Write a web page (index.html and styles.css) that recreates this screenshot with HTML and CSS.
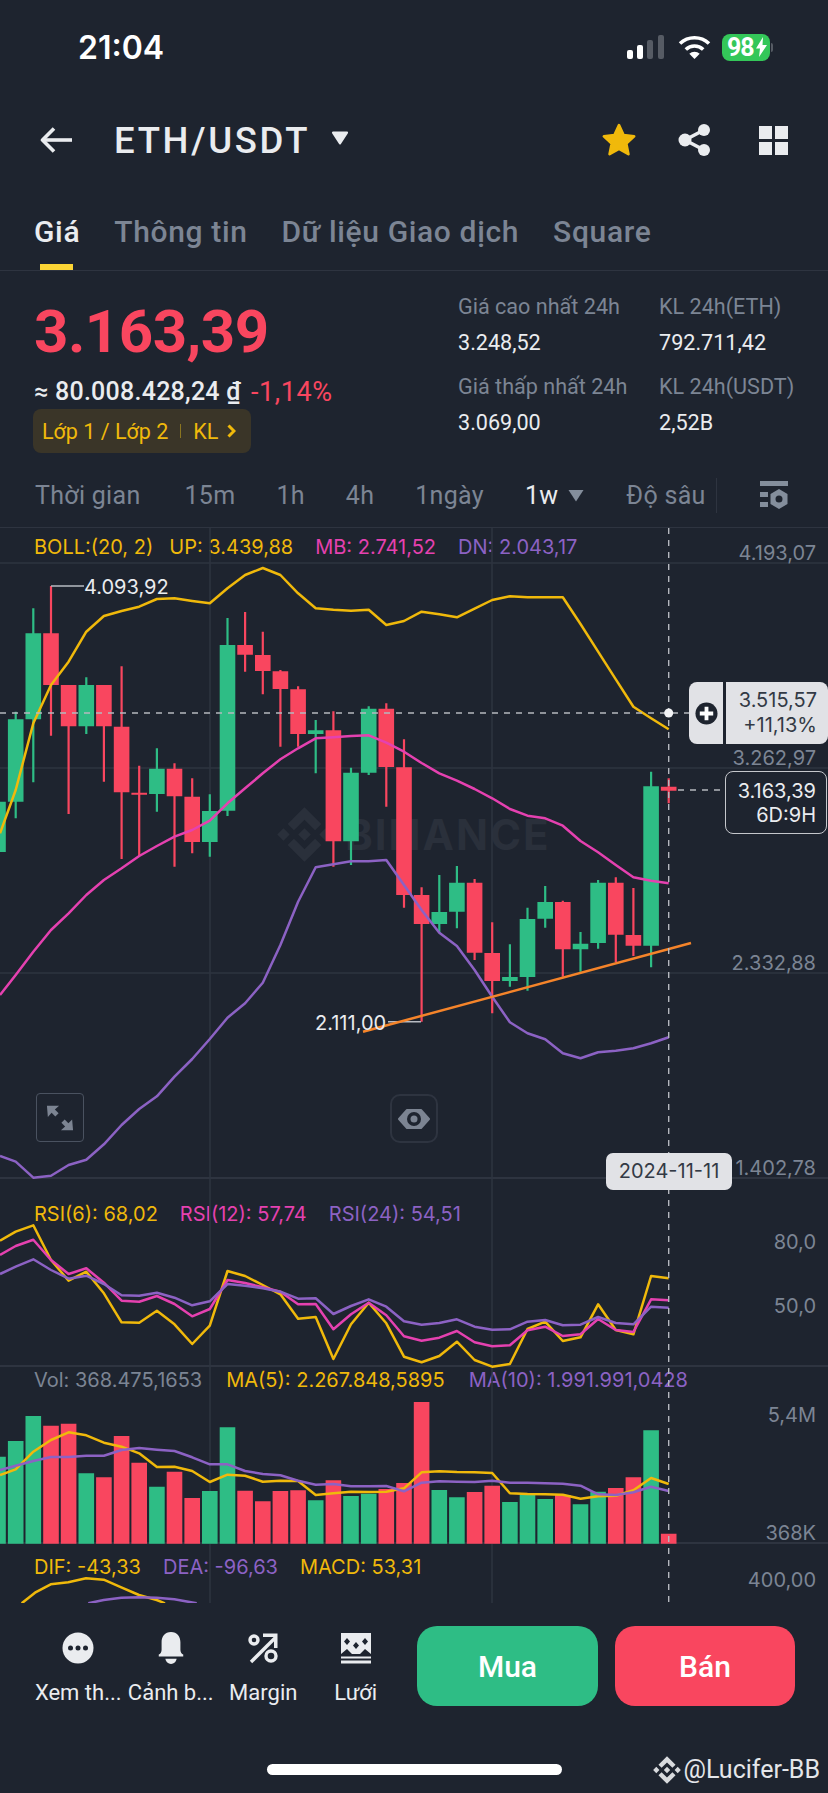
FILE: index.html
```html
<!DOCTYPE html>
<html lang="vi">
<head>
    <meta charset="UTF-8">
    <meta name="viewport" content="width=device-width, initial-scale=1.0">
    <title>ETH/USDT</title>
    <link rel="stylesheet" href="styles.css">
</head>
<body>
    <div class="phone">
        <div class="status">
            <span class="clock">21:04</span>
            <div class="status-icons">
                <svg class="signal" viewBox="0 0 37 24">
                    <rect x="0" y="15" width="6" height="9" rx="2" fill="#fff"/>
                    <rect x="10" y="10" width="6" height="14" rx="2" fill="#fff"/>
                    <rect x="20" y="5" width="6" height="19" rx="2" fill="#565b64"/>
                    <rect x="31" y="0" width="6" height="24" rx="2" fill="#565b64"/>
                </svg>
                <svg class="wifi" viewBox="0 0 33 24" fill="none" stroke="#fff" stroke-width="3.6">
                    <path d="M2 8.5a21 21 0 0 1 29 0"/>
                    <path d="M7.8 14.5a12.6 12.6 0 0 1 17.4 0"/>
                    <path d="M16.5 24l-5.2-5.2a7.4 7.4 0 0 1 10.4 0z" fill="#fff" stroke="none"/>
                </svg>
                <div class="battery">
                    <span>98</span>
                    <svg class="bolt" viewBox="0 0 11 20"><path d="M7 0L0 11.5h4L3 20l8-12H6.5z" fill="#fff"/></svg>
                </div>
                <span class="battery-nub"></span>
            </div>
        </div>

        <div class="header">
            <svg class="back" viewBox="0 0 32 26" fill="none" stroke="#eaecef" stroke-width="3.6" stroke-linejoin="round">
                <path d="M32 13H3"/>
                <path d="M14 1.5L2.5 13 14 24.5"/>
            </svg>
            <h1 class="pair">ETH/USDT</h1>
            <svg class="caret" viewBox="0 0 16 13"><path d="M1.5 1.5h13L8 11.5z" fill="#eaecef" stroke="#eaecef" stroke-width="2" stroke-linejoin="round"/></svg>
            <div class="header-icons">
                <svg class="star" viewBox="0 0 34 34"><path d="M17 3l4.3 9.3 10 1.2-7.4 6.900 2 10L17 25.400 8.100 30.400l2-10L2.700 13.500l10-1.200z" fill="#f0b90b" stroke="#f0b90b" stroke-width="2.500" stroke-linejoin="round"/></svg>
                <svg class="share" viewBox="0 0 34 34" fill="#eaecef">
                    <path d="M26 7L7 17l19 10" fill="none" stroke="#eaecef" stroke-width="3.500"/>
                    <circle cx="26" cy="7" r="6"/>
                    <circle cx="7" cy="17" r="6.500"/>
                    <circle cx="26" cy="27" r="6"/>
                </svg>
                <div class="apps"><span></span><span></span><span></span><span></span></div>
            </div>
        </div>

        <nav class="tabs">
            <a class="tab tab-active">Giá</a>
            <a class="tab">Thông tin</a>
            <a class="tab">Dữ liệu Giao dịch</a>
            <a class="tab">Square</a>
        </nav>

        <section class="summary">
            <div class="quote">
                <div class="last-price">3.163,39</div>
                <div class="fiat-row">
                    <span class="fiat">≈ 80.008.428,24 ₫</span>
                    <span class="change">-1,14%</span>
                </div>
                <div class="tag">
                    <span>Lớp 1 / Lớp 2</span>
                    <i class="tag-divider"></i>
                    <span>KL</span>
                    <svg class="tag-chevron" viewBox="0 0 9 14" fill="none" stroke="#f0b90b" stroke-width="3"><path d="M1.500 1.500L7 7l-5.500 5.500"/></svg>
                </div>
            </div>
            <div class="stats">
                <div class="stat"><span class="stat-label">Giá cao nhất 24h</span><span class="stat-value">3.248,52</span></div>
                <div class="stat"><span class="stat-label">KL 24h(ETH)</span><span class="stat-value">792.711,42</span></div>
                <div class="stat"><span class="stat-label">Giá thấp nhất 24h</span><span class="stat-value">3.069,00</span></div>
                <div class="stat"><span class="stat-label">KL 24h(USDT)</span><span class="stat-value">2,52B</span></div>
            </div>
        </section>

        <div class="intervals">
            <span class="interval-first">Thời gian</span>
            <span>15m</span>
            <span>1h</span>
            <span>4h</span>
            <span>1ngày</span>
            <span class="interval-active">1w
                <svg class="interval-caret" viewBox="0 0 17 13"><path d="M1 1h15L8.500 12.500z" fill="#848e9c"/></svg>
            </span>
            <span>Độ sâu</span>
            <i class="interval-divider"></i>
            <svg class="chart-settings" viewBox="0 0 28 28" fill="#848e9c">
                <rect x="0" y="0" width="28" height="5"/>
                <rect x="0" y="11" width="8" height="5"/>
                <rect x="0" y="21" width="8" height="5"/>
                <path fill-rule="evenodd" d="M19 8l8.500 5v10L19 28l-8.500-5V13zM19 14.500a3.500 3.500 0 1 0 0 7 3.500 3.500 0 0 0 0-7z"/>
            </svg>
        </div>

        <section class="chart">
            <div class="panel panel-main">
                <div class="legend legend-boll">
                    <span class="c-yellow">BOLL:(20, 2)</span>
                    <span class="c-yellow">UP: 3.439,88</span>
                    <span class="c-pink">MB: 2.741,52</span>
                    <span class="c-purple">DN: 2.043,17</span>
                </div>
                <div class="watermark">
                    <svg class="watermark-logo" viewBox="0 0 126 126"><path d="M38.730 53.200L63 28.940l24.280 24.270 14.120-14.120L63 .69 24.600 39.090l14.130 14.110zM.68 63l14.120-14.120L28.920 63 14.800 77.120.68 63zm38.050 9.800L63 97.070 87.280 72.800l14.120 14.100-38.400 38.410-38.400-38.400-.02-.02L38.730 72.800zM97.080 63l14.120-14.120L125.320 63 111.200 77.120 97.080 63zM77.320 63L63 77.330 48.690 63.020 63 48.680z"/></svg>
                    <span>BINANCE</span>
                </div>
            </div>
            <div class="panel panel-rsi">
                <div class="legend">
                    <span class="c-yellow">RSI(6): 68,02</span>
                    <span class="c-pink">RSI(12): 57,74</span>
                    <span class="c-purple">RSI(24): 54,51</span>
                </div>
            </div>
            <div class="panel panel-vol">
                <div class="legend legend-vol">
                    <span class="c-gray">Vol: 368.475,1653</span>
                    <span class="c-yellow">MA(5): 2.267.848,5895</span>
                    <span class="c-purple">MA(10): 1.991.991,0428</span>
                </div>
            </div>
            <div class="panel panel-macd">
                <div class="legend">
                    <span class="c-yellow">DIF: -43,33</span>
                    <span class="c-purple">DEA: -96,63</span>
                    <span class="c-yellow">MACD: 53,31</span>
                </div>
            </div>

            <svg class="plot" viewBox="0 528 828 1075" fill="none">
                <path class="grid" d="M210 528V1603M492 528V1603M0 563H828M0 768H828M0 973H828"/>

                <!-- candles -->
                <path class="wick up" d="M15.700 711.700V818.300M33.300 608.300V782.300M86.300 677.300V734M156.900 748.300V811.700M209.800 794.300V856.700M227.500 618V816M315.700 720V773.300M351 767.700V865M368.700 706.300V775M439.300 875V933M456.900 866V928.300M509.900 944.300V986.700M527.500 907.700V990.700M545.200 886V927.700M580.500 932V971.700M598.100 880V948.700M651.100 771.700V967.300"/>
                <path class="body up" d="M-2 801.700V852M15.700 719.300V801.700M33.300 633.300V719.300M86.300 685V726.300M156.900 768.700V794M209.800 811V842M227.500 645V810.700M315.700 730.300V734M351 772.700V841.300M368.700 708.700V772.700M439.300 912V924M456.900 882.700V911.700M509.900 977V981M527.500 919V977M545.200 902V918.700M580.500 943.700V949.300M598.100 882.700V943M651.100 786.300V945.700"/>
                <path class="wick down" d="M51 586V735.700M68.600 685V814M103.900 685V781.700M121.600 666.300V859M139.200 765.700V856M174.500 763.300V866.700M192.200 778.300V853.300M245.100 612V671.700M262.800 631.700V694.300M280.400 670V746.700M298.100 686.300V746.700M333.400 711.300V866.700M386.300 703.300V806.700M404 739.300V907.700M421.600 887.300V1021.700M474.600 879V960M492.200 922.300V1013.300M562.800 900.700V976.700M615.800 877.300V962M633.400 888V956M668.700 778.300V803.300"/>
                <path class="body down" d="M51 633.300V685M68.600 685V726.300M103.900 685V726.300M121.600 726.700V792.300M139.200 792.700V794.700M174.500 768.700V796.300M192.200 796.700V842M245.100 645V654.700M262.800 655V671M280.400 671.300V689M298.100 689.300V734M333.400 730.300V841.300M386.300 708.700V767M404 767.300V895M421.600 895V924M474.600 882.700V952.700M492.200 953V981M562.800 902V949.300M615.800 882.700V934.700M633.400 935V945.700M668.700 786.700V790.700"/>

                <!-- bollinger -->
                <polyline class="line yellow" points="0,833.300 15.700,790 33.300,723.300 51,685 68.600,661.700 86.300,631.700 103.900,616 121.600,611 139.200,606.700 156.900,599 174.500,598.300 192.200,601 209.800,603.300 227.500,588.300 245.100,575 262.800,568 280.400,575 298.100,593.300 315.700,608.300 333.400,609.700 351,610.700 368.700,609.700 386.300,625 404,621 421.600,611.700 439.300,614.300 456.900,617.300 474.600,608.700 492.200,600 509.900,596.300 527.500,597.300 545.200,597.300 562.800,597.300 580.500,624 598.100,651.700 615.800,679.300 633.400,706.700 651.100,718.300 668.700,729.300"/>
                <polyline class="line pink" points="0,995 15.700,975 33.300,951.700 51,930 68.600,913.300 86.300,895 103.900,880 121.600,868.300 139.200,856 156.900,846 174.500,836.700 192.200,830 209.800,820.700 227.500,803.300 245.100,788.300 262.800,773.300 280.400,759.300 298.100,748.300 315.700,738.300 333.400,737.300 351,736 368.700,735.300 386.300,742.700 404,751.700 421.600,763 439.300,773.300 456.900,780.700 474.600,789 492.200,798.300 509.900,809 527.500,815.700 545.200,818.300 562.800,825.700 580.500,841 598.100,852.300 615.800,865 633.400,877.300 651.100,880.700 668.700,883.300"/>
                <polyline class="line purple" points="0,1156 15.700,1161.700 33.300,1177.700 51,1175.700 68.600,1165 86.300,1159.700 103.900,1144.300 121.600,1125 139.200,1109 156.900,1096.300 174.500,1076.700 192.200,1059 209.800,1039 227.500,1017.700 245.100,1003.300 262.800,982.700 280.400,945 298.100,901.700 315.700,867.300 333.400,864.300 351,861.300 368.700,861.300 386.300,860 404,885 421.600,910 439.300,932.700 456.900,946 474.600,970 492.200,996.700 509.900,1022.300 527.500,1033.300 545.200,1039.300 562.800,1053.300 580.500,1058.300 598.100,1052.300 615.800,1050.700 633.400,1048.300 651.100,1043.300 668.700,1037.300"/>

                <!-- drawn trend line and high/low markers -->
                <path class="marker" d="M51 586H84M388 1021.700H421"/>
                <line class="trend" x1="363" y1="1031.700" x2="691" y2="943"/>
                <text class="note" x="84" y="594">4.093,92</text>
                <text class="note" x="315" y="1030">2.111,00</text>

                <!-- rsi -->
                <polyline class="line yellow" points="0,1240.700 15.700,1231.700 33.300,1225.300 51,1260 68.600,1280.700 86.300,1271.700 103.900,1293.300 121.600,1322.300 139.200,1322.700 156.900,1310.700 174.500,1324.300 192.200,1344 209.800,1325.700 227.500,1271 245.100,1276 262.800,1285 280.400,1294.300 298.100,1318.700 315.700,1317 333.400,1359 351,1324.300 368.700,1302.700 386.300,1323.300 404,1356.700 421.600,1362.300 439.300,1356 456.900,1341.700 474.600,1360 492.200,1366.700 509.900,1364 527.500,1329 545.200,1321.700 562.800,1341 580.500,1337.300 598.100,1304.300 615.800,1330 633.400,1334.300 651.100,1276 668.700,1278.300"/>
                <polyline class="line pink" points="0,1255 15.700,1246 33.300,1239.700 51,1260 68.600,1274 86.300,1268.300 103.900,1282.700 121.600,1300.700 139.200,1301.700 156.900,1296 174.500,1304 192.200,1316.300 209.800,1309 227.500,1280 245.100,1283 262.800,1287.300 280.400,1291.700 298.100,1304.300 315.700,1304 333.400,1329.300 351,1314.300 368.700,1302.700 386.300,1315.300 404,1336.300 421.600,1340.700 439.300,1337.700 456.900,1331 474.600,1342.300 492.200,1346.300 509.900,1345.300 527.500,1330.300 545.200,1326.700 562.800,1336 580.500,1334.300 598.100,1319 615.800,1330 633.400,1332 651.100,1299.300 668.700,1300.300"/>
                <polyline class="line purple" points="0,1274 15.700,1266.700 33.300,1259.300 51,1270 68.600,1278.700 86.300,1275.700 103.900,1284 121.600,1295.300 139.200,1295.700 156.900,1292.700 174.500,1297.700 192.200,1305.300 209.800,1301.300 227.500,1284 245.100,1285.700 262.800,1288.300 280.400,1291.700 298.100,1298.700 315.700,1298.300 333.400,1314 351,1306 368.700,1299.300 386.300,1306.700 404,1321.300 421.600,1324.700 439.300,1323 456.900,1319.300 474.600,1326.700 492.200,1329.700 509.900,1329.300 527.500,1321.700 545.200,1320 562.800,1325.300 580.500,1324.700 598.100,1317 615.800,1323 633.400,1324.300 651.100,1306.700 668.700,1307.700"/>

                <!-- volume -->
                <path class="body up" d="M-2 1543.700V1456.700M15.700 1543.700V1441M33.300 1543.700V1416M86.300 1543.700V1473.300M156.900 1543.700V1486.700M209.800 1543.700V1491M227.500 1543.700V1427.300M315.700 1543.700V1500.300M351 1543.700V1496M368.700 1543.700V1493.700M439.300 1543.700V1490M456.900 1543.700V1497.300M509.900 1543.700V1502M527.500 1543.700V1494.300M545.200 1543.700V1499M580.500 1543.700V1504.300M598.100 1543.700V1491.700M651.100 1543.700V1430.300"/>
                <path class="body down" d="M51 1543.700V1425.700M68.600 1543.700V1423.700M103.900 1543.700V1477.300M121.600 1543.700V1436M139.200 1543.700V1462.700M174.500 1543.700V1471.700M192.200 1543.700V1498M245.100 1543.700V1490.700M262.800 1543.700V1501.300M280.400 1543.700V1491M298.100 1543.700V1490.300M333.400 1543.700V1480.300M386.300 1543.700V1489M404 1543.700V1483M421.600 1543.700V1402M474.600 1543.700V1492M492.200 1543.700V1485.700M562.800 1543.700V1495M615.800 1543.700V1488M633.400 1543.700V1477.300M668.700 1543.700V1533.700"/>
                <polyline class="line yellow" points="0,1475 15.700,1469.300 33.300,1451.700 51,1440 68.600,1432.300 86.300,1435.300 103.900,1442.700 121.600,1446.700 139.200,1453.300 156.900,1467 174.500,1466.700 192.200,1471 209.800,1482 227.500,1474.700 245.100,1475.700 262.800,1481.700 280.400,1480.700 298.100,1481 315.700,1495 333.400,1493.300 351,1491.700 368.700,1492 386.300,1491.700 404,1488.300 421.600,1472.300 439.300,1471.300 456.900,1472 474.600,1472.300 492.200,1473 509.900,1493.300 527.500,1494 545.200,1494.300 562.800,1494.700 580.500,1498.700 598.100,1496.300 615.800,1495.700 633.400,1490.300 651.100,1478 668.700,1484"/>
                <polyline class="line purple" points="0,1470 15.700,1465.700 33.300,1461 51,1457 68.600,1457 86.300,1455.700 103.900,1455.700 121.600,1450 139.200,1448 156.900,1449.700 174.500,1451 192.200,1457.300 209.800,1464.300 227.500,1464.300 245.100,1471 262.800,1474 280.400,1475.300 298.100,1480.700 315.700,1484.700 333.400,1484 351,1486.300 368.700,1486.300 386.300,1486 404,1491.300 421.600,1482.700 439.300,1481.300 456.900,1481.700 474.600,1482 492.200,1480.700 509.900,1482.700 527.500,1482.700 545.200,1483.300 562.800,1483.700 580.500,1485.700 598.100,1494.300 615.800,1495 633.400,1492.300 651.100,1486.700 668.700,1491"/>

                <!-- macd -->
                <polyline class="line yellow" points="21.700,1603.300 35,1592.700 50.700,1584.300 68.300,1582.300 86,1578.300 103.700,1579.700 121.300,1587.300 139,1595 156.700,1600 165,1603.300"/>
                <polyline class="line purple" points="88.300,1603.300 103.700,1600 121.300,1597.700 139,1597.300 156.700,1597.700 174.300,1599.300 196.700,1603.300"/>

                <!-- crosshair -->
                <path class="cross" d="M668.700 528V1603M0 713H690M678 790H722"/>
                <circle class="cross-dot" cx="668.700" cy="713" r="4.500"/>

                <text class="tick" x="816" y="560">4.193,07</text>
                <text class="tick" x="816" y="765">3.262,97</text>
                <text class="tick" x="816" y="970">2.332,88</text>
                <text class="tick" x="816" y="1175">1.402,78</text>
                <text class="tick" x="816" y="1249">80,0</text>
                <text class="tick" x="816" y="1313">50,0</text>
                <text class="tick" x="816" y="1422">5,4M</text>
                <text class="tick" x="816" y="1540">368K</text>
                <text class="tick" x="816" y="1587">400,00</text>
            </svg>

            <div class="order-pill">
                <span class="order-add">
                    <svg viewBox="0 0 24 24"><circle cx="12" cy="12" r="11.500" fill="#1e242f"/><path d="M12 5v14M5 12h14" stroke="#fff" stroke-width="4"/></svg>
                </span>
                <div class="order-text"><span>3.515,57</span><span>+11,13%</span></div>
            </div>
            <div class="price-tag"><span>3.163,39</span><span>6D:9H</span></div>
            <div class="date-tag">2024-11-11</div>

            <div class="chart-btn expand-btn">
                <svg viewBox="0 0 30 30" fill="#7c8492">
                    <path d="M1 2h13l-4.500 4 4 4-3.500 3.500-4-4L2 14z"/>
                    <path d="M29 28H16l4.500-4-4-4 3.500-3.500 4 4 4-4z"/>
                </svg>
            </div>
            <div class="chart-btn eye-btn">
                <svg viewBox="0 0 32 24">
                    <path d="M1 12l8-9h14l8 9-8 9H9z" fill="#7c8492" stroke="#7c8492" stroke-width="2" stroke-linejoin="round"/>
                    <circle cx="16" cy="12" r="7" fill="#1e242f"/>
                    <circle cx="16" cy="12" r="3.500" fill="#7c8492"/>
                </svg>
            </div>
        </section>

        <div class="toolbar">
            <div class="action">
                <svg viewBox="0 0 32 32"><circle cx="16" cy="16" r="15.500" fill="#eaecef"/><g fill="#1e242f"><circle cx="8.500" cy="16" r="2.500"/><circle cx="16" cy="16" r="2.500"/><circle cx="23.500" cy="16" r="2.500"/></g></svg>
                <span>Xem th...</span>
            </div>
            <div class="action">
                <svg viewBox="0 0 32 34" fill="#eaecef"><path d="M16 0c-6.500 0-10 5-10 11v8c0 2.500-1.500 4-3 5v2h26v-2c-1.500-1-3-2.500-3-5v-8c0-6-3.500-11-10-11z"/><path d="M10 28.500h12c-.5 3-3 5.500-6 5.500s-5.500-2.500-6-5.500z"/></svg>
                <span>Cảnh b...</span>
            </div>
            <div class="action">
                <svg viewBox="0 0 32 32" fill="none" stroke="#eaecef" stroke-width="3.400">
                    <path d="M4 30L28 6"/>
                    <path d="M16 1.500H30.500V16H27V5H16z" fill="#eaecef" stroke="none"/>
                    <circle cx="7" cy="8" r="4"/>
                    <circle cx="24" cy="24" r="5"/>
                </svg>
                <span>Margin</span>
            </div>
            <div class="action">
                <svg viewBox="0 0 32 32" fill="#eaecef">
                    <path fill-rule="evenodd" d="M1 1h30v21H1zM7 6L4 9.500 7 13l3-3.500zM16 10l-3 3.500 3 3.500 3-3.500zM25 6l-3 3.500 3 3.500 3-3.500zM1 22l6-5 5 5zM20 22l5-5 6 5z"/>
                    <rect x="1" y="24.500" width="30" height="2"/>
                    <rect x="1" y="28.500" width="30" height="3"/>
                </svg>
                <span>Lưới</span>
            </div>
            <a class="trade trade-buy">Mua</a>
            <a class="trade trade-sell">Bán</a>
        </div>

        <div class="home-bar"><span class="home-handle"></span></div>

        <div class="credit">
            <svg viewBox="0 0 126 126"><path d="M38.730 53.200L63 28.940l24.280 24.270 14.120-14.120L63 .69 24.600 39.090l14.130 14.110zM.68 63l14.120-14.120L28.920 63 14.800 77.120.68 63zm38.050 9.800L63 97.070 87.280 72.800l14.120 14.100-38.400 38.410-38.400-38.400-.02-.02L38.730 72.800zM97.080 63l14.120-14.120L125.320 63 111.200 77.120 97.080 63zM77.320 63L63 77.330 48.690 63.020 63 48.680z"/></svg>
            <span>@Lucifer-BB</span>
        </div>
    </div>
</body>
</html>
```

FILE: styles.css
```css
* {
    box-sizing: border-box;
}
body {
    margin: 0;
    background-color: #1e242f;
    font-family: Roboto, "Noto Sans", sans-serif;
    color: #eaecef;
}
.phone {
    position: relative;
    width: 828px;
    height: 1793px;
    overflow: hidden;
}

/* status bar */
.status {
    display: flex;
    justify-content: space-between;
    align-items: center;
    height: 94px;
    padding: 0 55px 0 78px;
}
.clock {
    font-family: Inter, sans-serif;
    font-size: 32px;
    font-weight: 600;
    color: #fff;
}
.status-icons {
    display: flex;
    align-items: center;
}
.signal {
    width: 37px;
    height: 24px;
}
.wifi {
    width: 33px;
    height: 24px;
    margin-left: 14px;
}
.battery {
    display: flex;
    align-items: center;
    justify-content: space-between;
    width: 48px;
    height: 27px;
    margin-left: 11px;
    padding: 0 3px 0 5px;
    border-radius: 8px;
    background-color: #34c759;
    color: #fff;
    font-size: 25px;
    font-weight: 700;
    letter-spacing: -1px;
}
.bolt {
    width: 11px;
    height: 20px;
}
.battery-nub {
    width: 2px;
    height: 9px;
    margin-left: 1px;
    border-radius: 0 2px 2px 0;
    background-color: #565b64;
}

/* header */
.header {
    display: flex;
    align-items: center;
    height: 92px;
    padding: 0 40px;
}
.back {
    width: 32px;
    height: 26px;
}
.pair {
    margin: 0 0 0 42px;
    font-size: 36.5px;
    font-weight: 500;
    letter-spacing: 2.7px;
}
.caret {
    width: 18px;
    height: 14px;
    margin: -4px 0 0 21px;
}
.header-icons {
    display: flex;
    align-items: center;
    margin-left: auto;
}
.star {
    width: 36px;
    height: 36px;
}
.share {
    width: 34px;
    height: 34px;
    margin-left: 41px;
}
.apps {
    display: grid;
    grid-template-columns: 13px 13px;
    gap: 3px;
    margin-left: 47px;
}
.apps span {
    height: 13px;
    background-color: #eaecef;
}

/* tabs */
.tabs {
    display: flex;
    gap: 34px;
    height: 85px;
    padding: 28px 0 0 34px;
    border-bottom: 1px solid #2e3440;
}
.tab {
    position: relative;
    font-size: 30px;
    font-weight: 500;
    letter-spacing: 0.65px;
    color: #7c8594;
}
.tab-active {
    color: #eaecef;
}
.tab-active::after {
    content: "";
    position: absolute;
    left: 6px;
    bottom: 0;
    width: 33px;
    height: 6px;
    background-color: #fcd535;
}

/* price summary */
.summary {
    display: flex;
    justify-content: space-between;
    height: 192px;
    padding-left: 34px;
}
.last-price {
    margin-top: 26px;
    font-size: 60px;
    line-height: 70px;
    font-weight: 700;
    letter-spacing: -0.5px;
    color: #f9465f;
}
.fiat-row {
    display: flex;
    gap: 10px;
    margin-top: 10px;
    line-height: 30px;
    font-size: 25px;
}
.fiat {
    font-weight: 500;
    letter-spacing: 0.25px;
}
.change {
    font-size: 27px;
    letter-spacing: 0.6px;
    color: #f9465f;
}
.tag {
    display: inline-flex;
    align-items: center;
    height: 44px;
    margin: 2px 0 0 -1px;
    padding: 0 15px 0 9px;
    border-radius: 8px;
    background-color: #3a3528;
    color: #f0b90b;
    font-size: 21.5px;
}
.tag-divider {
    width: 1px;
    height: 14px;
    margin: 0 12px;
    background-color: #8a7520;
}
.tag-chevron {
    width: 9px;
    height: 14px;
    margin-left: 9px;
}
.stats {
    display: grid;
    grid-template-columns: 201px 169px;
    grid-auto-rows: 64px;
    row-gap: 16px;
    padding-top: 22px;
}
.stat {
    display: flex;
    flex-direction: column;
    gap: 8px;
    line-height: 28px;
    font-size: 21.6px;
}
.stat-label {
    color: #7c8594;
}

/* interval row */
.intervals {
    display: flex;
    align-items: center;
    gap: 41px;
    height: 65px;
    padding-left: 35px;
    border-bottom: 1px solid #2e3440;
    font-size: 25px;
    letter-spacing: 0.3px;
    color: #7c8594;
}
.intervals span {
    white-space: nowrap;
}
.interval-first {
    margin-right: 3px;
}
.interval-active {
    display: flex;
    align-items: center;
    gap: 9px;
    color: #eaecef;
}
.interval-caret {
    width: 18px;
    height: 13px;
}
.interval-divider {
    width: 1px;
    height: 35px;
    margin-left: -31px;
    background-color: #2e3440;
}
.chart-settings {
    width: 28px;
    height: 28px;
    margin-left: 2px;
}

/* chart */
.chart {
    position: relative;
    height: 1075px;
    font-family: Inter, sans-serif;
    font-size: 20px;
}
.plot {
    position: absolute;
    top: 0;
    left: 0;
    width: 828px;
    height: 1075px;
}
.panel {
    border-bottom: 2px solid #2e3440;
}
.panel-main {
    position: relative;
    height: 651px;
    padding-top: 9px;
}
.panel-rsi {
    height: 188px;
    padding-top: 25px;
}
.panel-vol {
    height: 177px;
    padding-top: 3px;
}
.panel-macd {
    height: 59px;
    padding-top: 13px;
    border-bottom: 0;
}
.legend {
    display: flex;
    gap: 22px;
    padding-left: 34px;
    line-height: 20px;
    white-space: nowrap;
}
.legend-boll span:first-child {
    margin-right: -6px;
}
.legend-vol {
    gap: 24px;
}
.c-yellow {
    color: #f0b90b;
}
.c-pink {
    color: #e541b0;
}
.c-purple {
    color: #8c62c4;
}
.c-gray {
    color: #7c8594;
}
.watermark {
    position: absolute;
    top: 279px;
    left: 277px;
    display: flex;
    align-items: center;
    gap: 13px;
    color: #2a303b;
    font-size: 42px;
    font-weight: 700;
    letter-spacing: 2px;
}
.watermark-logo {
    width: 55px;
    height: 55px;
    fill: #2a303b;
}

.grid {
    stroke: #2e3440;
    stroke-width: 1.5;
}
.wick {
    stroke-width: 2.2;
}
.body {
    stroke-width: 15.6;
}
.up {
    stroke: #2ebd85;
}
.down {
    stroke: #f9465f;
}
.line {
    stroke-width: 2.5;
    stroke-linejoin: round;
}
.yellow {
    stroke: #f0b90b;
}
.pink {
    stroke: #e541b0;
}
.purple {
    stroke: #8c62c4;
}
.marker {
    stroke: #b7bbc2;
    stroke-width: 1.5;
}
.trend {
    stroke: #f5842a;
    stroke-width: 2.5;
}
.note {
    fill: #eaecef;
    font-size: 20px;
}
.tick {
    fill: #7c8594;
    font-size: 20px;
    text-anchor: end;
}
.cross {
    stroke: #b5b8bf;
    stroke-width: 1.4;
    stroke-dasharray: 6 6;
}
.cross-dot {
    fill: #f2f3f5;
}

/* overlays on the chart */
.order-pill {
    position: absolute;
    top: 154px;
    right: 0;
    display: flex;
    width: 139px;
    height: 62px;
    border-radius: 8px;
    background-color: #e1e2e6;
    color: #333a45;
}
.order-add {
    display: flex;
    align-items: center;
    justify-content: center;
    width: 37px;
    border-right: 3px solid #1e242f;
}
.order-add svg {
    width: 23px;
    height: 23px;
}
.order-text {
    display: flex;
    flex-direction: column;
    justify-content: center;
    align-items: flex-end;
    flex: 1;
    padding-right: 11px;
    line-height: 25px;
}
.price-tag {
    position: absolute;
    top: 243px;
    right: 1px;
    display: flex;
    flex-direction: column;
    justify-content: center;
    align-items: flex-end;
    width: 102px;
    height: 63px;
    padding-right: 10px;
    border: 1.5px solid #c5c7cc;
    border-radius: 8px;
    background-color: #1e242f;
    line-height: 24px;
    color: #eaecef;
}
.date-tag {
    position: absolute;
    top: 625px;
    left: 606px;
    width: 126px;
    height: 37px;
    border-radius: 7px;
    background-color: #e1e2e6;
    line-height: 37px;
    text-align: center;
    color: #333a45;
}
.chart-btn {
    position: absolute;
    display: flex;
    align-items: center;
    justify-content: center;
    width: 48px;
    height: 49px;
}
.expand-btn {
    top: 565px;
    left: 36px;
    border: 1.5px solid #4a5260;
    border-radius: 4px;
}
.expand-btn svg {
    width: 28px;
    height: 28px;
}
.eye-btn {
    top: 566px;
    left: 390px;
    border: 2px solid #2e3440;
    border-radius: 10px;
}
.eye-btn svg {
    width: 32px;
    height: 24px;
}

/* bottom toolbar */
.toolbar {
    display: flex;
    align-items: flex-start;
    height: 161px;
    padding: 23px 0 0 32px;
}
.action {
    display: flex;
    flex-direction: column;
    align-items: center;
    width: 92.5px;
    padding-top: 6px;
    font-size: 22px;
    white-space: nowrap;
}
.action svg {
    width: 32px;
    height: 32px;
    margin-bottom: 16px;
}
.trade {
    display: flex;
    align-items: center;
    justify-content: center;
    width: 181px;
    height: 80px;
    border-radius: 20px;
    color: #fff;
    font-size: 30px;
    font-weight: 500;
}
.trade-buy {
    margin-left: 15px;
    background-color: #2ebd85;
}
.trade-sell {
    width: 180px;
    margin-left: 17px;
    background-color: #f9465f;
}
.home-bar {
    display: flex;
    justify-content: center;
}
.home-handle {
    width: 295px;
    height: 11px;
    margin-left: 1px;
    border-radius: 6px;
    background-color: #fff;
}
.credit {
    position: absolute;
    right: 8px;
    bottom: 9px;
    display: flex;
    align-items: center;
    gap: 2px;
    font-size: 25px;
    color: #e4e6ea;
}
.credit svg {
    width: 28px;
    height: 28px;
    fill: #d8dadd;
}
```
